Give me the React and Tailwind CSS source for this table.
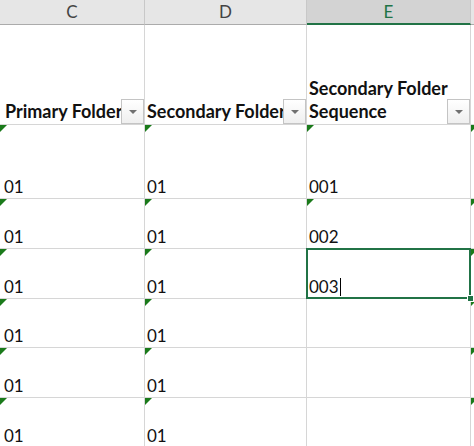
import React from "react";

const font = { fontFamily: "Lato, 'Open Sans', sans-serif" };

const rows = [
  { h: "h-[74px]", c: "01", d: "01", e: "001", tri: ["c", "d", "e", "f"] },
  { h: "h-[50px]", c: "01", d: "01", e: "002", tri: ["c", "d", "e", "f"] },
  { h: "h-[50px]", c: "01", d: "01", e: "003", tri: ["c", "d", "f"], selected: true },
  { h: "h-[49px]", c: "01", d: "01", e: "", tri: ["c", "d", "f"] },
  { h: "h-[50px]", c: "01", d: "01", e: "", tri: ["c", "d", "f"] },
  { h: "h-[50px]", c: "01", d: "01", e: "", tri: ["c", "d", "f"] },
];

function Triangle() {
  return (
    <span className="absolute left-0 top-0 h-0 w-0 border-t-[7px] border-r-[7px] border-t-[#1a7a1a] border-r-transparent" />
  );
}

function FilterButton() {
  return (
    <span className="absolute bottom-0 right-0 flex h-[25px] w-[23px] items-center justify-center border border-[#c4c4c4] bg-gradient-to-b from-white to-[#efefef]">
      <span className="h-0 w-0 border-x-[4px] border-t-[4px] border-x-transparent border-t-[#707070]" />
    </span>
  );
}

function Cell({ w, children, tri, className = "" }) {
  return (
    <div
      className={`relative flex shrink-0 items-end border-r border-b border-[#d6d6d6] pb-[1px] text-[17px] leading-[20px] text-[#111] ${w} ${className}`}
    >
      {tri && <Triangle />}
      {children}
    </div>
  );
}

export default function App() {
  return (
    <div className="h-[446px] w-[474px] overflow-hidden bg-white" style={font}>
      {/* column letters */}
      <div className="flex h-[25px] text-[17px]">
        <div className="flex w-[145px] shrink-0 items-center justify-center border-r border-b border-r-[#c8c8c8] border-b-[#ababab] bg-[#e6e6e6] text-[#444]">
          C
        </div>
        <div className="flex w-[162px] shrink-0 items-center justify-center border-r border-b border-r-[#c8c8c8] border-b-[#ababab] bg-[#e6e6e6] text-[#444]">
          D
        </div>
        <div className="flex w-[164px] shrink-0 items-center justify-center border-r border-b-2 border-r-[#c8c8c8] border-b-[#217346] bg-[#d3d3d3] pt-[1px] text-[#217346]">
          E
        </div>
        <div className="flex-1 border-b border-[#ababab] bg-[#e6e6e6]" />
      </div>

      {/* table header row */}
      <div className="flex h-[100px] font-bold">
        <Cell w="w-[145px]" className="overflow-hidden pl-[5px]">
          <span className="whitespace-nowrap text-[18px] leading-[23px]">Primary Folder</span>
          <FilterButton />
        </Cell>
        <Cell w="w-[162px]" className="overflow-hidden pl-[2px]">
          <span className="whitespace-nowrap text-[18px] leading-[23px]">Secondary Folder</span>
          <FilterButton />
        </Cell>
        <Cell w="w-[164px]" className="overflow-hidden pl-[2px]">
          <span className="text-[18px] leading-[23px]">
            Secondary Folder
            <br />
            Sequence
          </span>
          <FilterButton />
        </Cell>
        <div className="flex-1 border-b border-[#d6d6d6]" />
      </div>

      {/* data rows */}
      {rows.map((r, i) => (
        <div key={i} className={`flex ${r.h}`}>
          <Cell w="w-[145px]" tri={r.tri.includes("c")} className="pl-[4px]">
            {r.c}
          </Cell>
          <Cell w="w-[162px]" tri={r.tri.includes("d")} className="pl-[2px]">
            {r.d}
          </Cell>
          <Cell w="w-[164px]" tri={r.tri.includes("e")} className="pl-[2px]">
            {r.e}
            {r.selected && (
              <>
                <span className="mb-[1px] ml-[1px] h-[18px] w-px bg-black" />
                <span className="absolute -top-px -left-px -right-px -bottom-px border-2 border-[#217346]" />
                <span className="absolute -bottom-[4px] -right-[4px] z-10 h-[7px] w-[7px] border border-white bg-[#217346]" />
              </>
            )}
          </Cell>
          <div className="relative flex-1 border-b border-[#d6d6d6]">
            {r.tri.includes("f") && <Triangle />}
          </div>
        </div>
      ))}
    </div>
  );
}
